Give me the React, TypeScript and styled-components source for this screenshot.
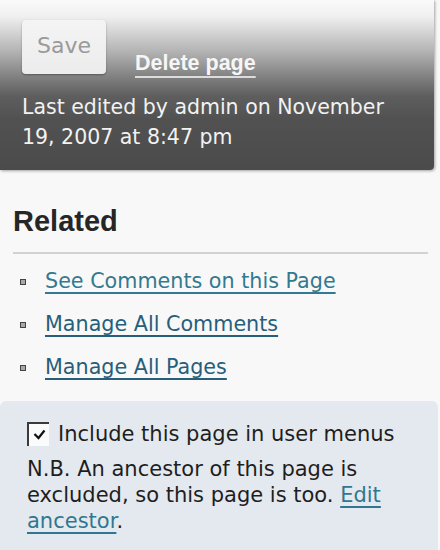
import React from "react";
import styled, { createGlobalStyle } from "styled-components";

const Global = createGlobalStyle`
  html, body { margin: 0; padding: 0; background: #f8f8f8; }
  body { font-family: "DejaVu Sans", "Liberation Sans", sans-serif; width: 440px; height: 550px; overflow: hidden; }
`;

const Page = styled.div`
  display: flex;
  flex-direction: column;
  width: 440px;
`;

const Panel = styled.div`
  width: 434px;
  box-sizing: border-box;
  padding: 20px 0 18px 22px;
  background: linear-gradient(
    to bottom,
    #fafafa 0px,
    #f0f0f0 16px,
    #d8d8d8 30px,
    #b2b2b2 52px,
    #828282 76px,
    #5e5e5e 96px,
    #515151 120px,
    #4b4b4b 170px
  );
  border-radius: 0 0 4px 0;
  box-shadow: 1px 1px 3px rgba(0, 0, 0, 0.35);
`;

const Actions = styled.div`
  display: flex;
  align-items: flex-end;
  gap: 29px;
  height: 54px;
`;

const SaveButton = styled.button`
  width: 84px;
  height: 54px;
  border: none;
  border-radius: 4px;
  background: linear-gradient(to bottom, #f4f4f4, #ececec);
  box-shadow: 0 1px 2px rgba(0, 0, 0, 0.35);
  color: #9a9a9a;
  font-family: "DejaVu Sans", sans-serif;
  font-size: 22px;
  padding: 0 0 4px 0;
`;

const DeleteLink = styled.a`
  font-family: "Liberation Sans", Arial, sans-serif;
  font-weight: bold;
  font-size: 21.5px;
  color: #f6f6f6;
  text-decoration: underline;
  text-decoration-thickness: 2px;
  text-underline-offset: 6px;
  text-decoration-color: #dcdcdc;
  line-height: 24px;
  margin-bottom: -1px;
`;

const EditedNote = styled.p`
  margin: 18px 0 0 0;
  color: #f2f2f2;
  font-size: 20.5px;
  line-height: 30px;
  padding-right: 30px;
`;

const Related = styled.section`
  display: flex;
  flex-direction: column;
  padding: 0 12px 0 13px;
  margin-top: 33px;
`;

const Heading = styled.h2`
  margin: 0;
  font-family: "Liberation Sans", Arial, sans-serif;
  font-weight: bold;
  font-size: 29px;
  line-height: 36px;
  color: #262626;
  padding-bottom: 13px;
  border-bottom: 2px solid #d2d2d2;
`;

const LinkList = styled.ul`
  list-style: none;
  margin: 12px 0 0 0;
  padding: 0 0 0 7px;
  display: flex;
  flex-direction: column;
  gap: 13px;
`;

const Item = styled.li`
  display: flex;
  align-items: center;
  gap: 19px;
  line-height: 30px;
`;

const Bullet = styled.span`
  width: 4px;
  height: 4px;
  border: 1px solid #444;
  background: #a8a8a8;
  flex: none;
  margin-top: 2px;
`;

const ListLink = styled.a<{ $visited?: boolean }>`
  font-size: 20.7px;
  color: ${(p) => (p.$visited ? "#275f7b" : "#33798f")};
  text-decoration: underline;
  text-underline-offset: 4px;
  text-decoration-thickness: 1.5px;
`;

const OptionsBox = styled.div`
  margin-top: 19px;
  width: 438px;
  box-sizing: border-box;
  background: #e4e9ef;
  border-radius: 6px 6px 0 0;
  padding: 18px 20px 20px 27px;
  color: #1e1e1e;
  font-size: 21px;
`;

const CheckRow = styled.label`
  display: flex;
  align-items: center;
  gap: 9px;
  line-height: 30px;
`;

const CheckBox = styled.span`
  width: 22px;
  height: 24px;
  box-sizing: border-box;
  border-top: 2px solid #3a3a3a;
  border-left: 2px solid #3a3a3a;
  background: #fbfbfb;
  display: flex;
  align-items: center;
  justify-content: center;
  margin-top: -1px;
`;

const Note = styled.p`
  margin: 7px 0 0 0;
  line-height: 26px;
`;

const NoteLink = styled.a`
  color: #2f7790;
  text-decoration: underline;
  text-underline-offset: 4px;
  text-decoration-thickness: 1.5px;
`;

export default function App() {
  return (
    <Page>
      <Global />
      <Panel>
        <Actions>
          <SaveButton>Save</SaveButton>
          <DeleteLink href="#">Delete page</DeleteLink>
        </Actions>
        <EditedNote>Last edited by admin on November 19, 2007 at 8:47 pm</EditedNote>
      </Panel>
      <Related>
        <Heading>Related</Heading>
        <LinkList>
          <Item>
            <Bullet />
            <ListLink href="#">See Comments on this Page</ListLink>
          </Item>
          <Item>
            <Bullet />
            <ListLink href="#" $visited>Manage All Comments</ListLink>
          </Item>
          <Item>
            <Bullet />
            <ListLink href="#" $visited>Manage All Pages</ListLink>
          </Item>
        </LinkList>
      </Related>
      <OptionsBox>
        <CheckRow>
          <CheckBox>
            <svg width="13" height="11" viewBox="0 0 13 11">
              <path d="M1.5 5 L5.5 9 L11.5 1.5" fill="none" stroke="#111" strokeWidth="2.2" />
            </svg>
          </CheckBox>
          Include this page in user menus
        </CheckRow>
        <Note>
          N.B. An ancestor of this page is excluded, so this page is too.{" "}
          <NoteLink href="#">Edit ancestor</NoteLink>.
        </Note>
      </OptionsBox>
    </Page>
  );
}
